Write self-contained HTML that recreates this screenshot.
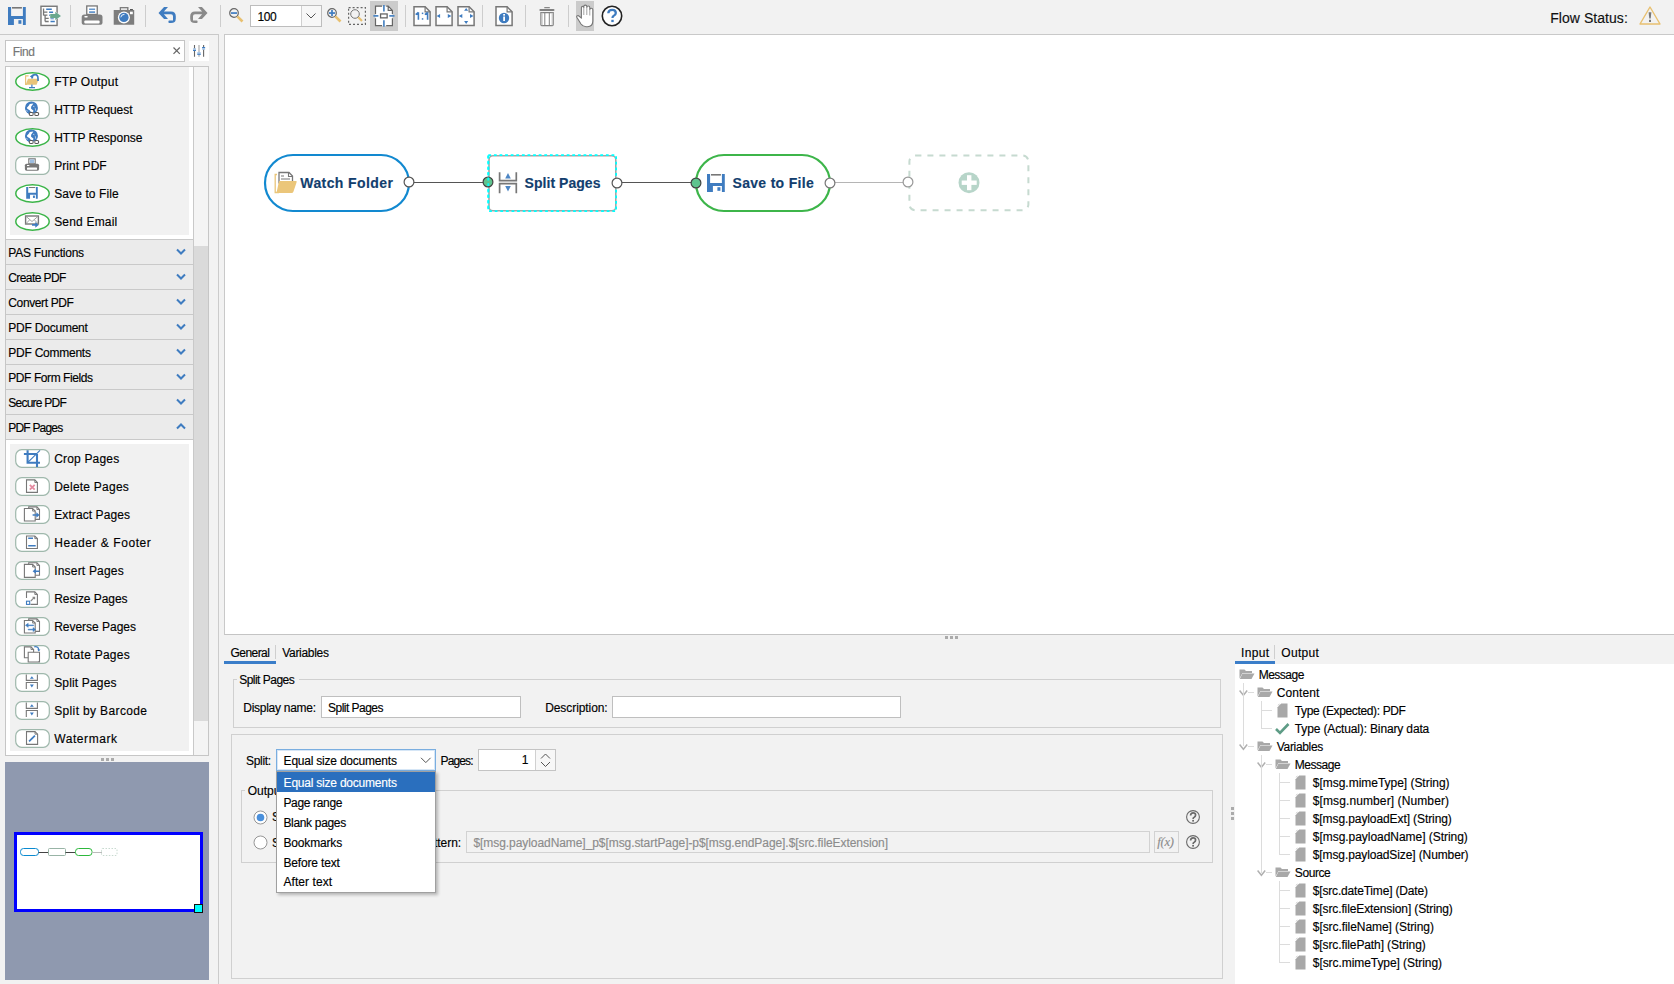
<!DOCTYPE html>
<html><head><meta charset="utf-8">
<style>
*{box-sizing:border-box;margin:0;padding:0}
html,body{width:1674px;height:984px;overflow:hidden;background:#f2f2f2;font-family:"Liberation Sans",sans-serif;font-size:12px;color:#111;position:relative}
.a{position:absolute}
.t{position:absolute;white-space:nowrap;-webkit-text-stroke:0.15px currentColor}
svg{position:absolute;overflow:visible}
</style></head><body>
<div class="a" style="left:0px;top:0px;width:1674px;height:34px;background:#f2f2f2"></div>
<div class="a" style="left:70px;top:5px;width:1px;height:22px;background:#cdcdcd"></div>
<div class="a" style="left:145px;top:5px;width:1px;height:22px;background:#cdcdcd"></div>
<div class="a" style="left:220px;top:5px;width:1px;height:22px;background:#cdcdcd"></div>
<div class="a" style="left:405px;top:5px;width:1px;height:22px;background:#cdcdcd"></div>
<div class="a" style="left:482px;top:5px;width:1px;height:22px;background:#cdcdcd"></div>
<div class="a" style="left:525px;top:5px;width:1px;height:22px;background:#cdcdcd"></div>
<div class="a" style="left:568px;top:5px;width:1px;height:22px;background:#cdcdcd"></div>
<div class="a" style="left:370px;top:1px;width:28px;height:30px;background:#cbcbcb"></div>
<div class="a" style="left:576px;top:1px;width:18px;height:30px;background:#cbcbcb"></div>
<svg style="left:8px;top:7px" width="18" height="18" viewBox="0 0 18 18" ><path d="M0 0H3.1V9H14.9V0H17.8V17.9H14.9V11.9H5.9V17.9H0Z" fill="#3f7cc0"/><rect x="4" y="0" width="9.9" height="1.6" fill="#777"/><rect x="10.4" y="13.2" width="3" height="3.6" fill="#3f7cc0"/></svg>
<svg style="left:36px;top:2px" width="28" height="28" viewBox="0 0 28 28" ><rect x="4.97" y="4.26" width="16.1" height="19.2" fill="#fff" stroke="#777" stroke-width="1.4"/><path d="M7.54 6.5V13.4M7.54 10.1H11.4M7.54 13.1H11.4M9.1 13.4V19.5M9.1 16.4H12.7M9.1 19.5H12.7" stroke="#777" stroke-width="1.3" fill="none"/><path d="M10.2 7.3H15.8M13.1 10.2H17.1M13.1 13.2H14M14.5 16.4H17.8M14.5 19.4H18.8" stroke="#3f7cc0" stroke-width="1.5"/><path d="M14.2 11.95H19.3V9.8L25 13.9L19.3 17.9V15.94H14.2Z" fill="#6aa88e" stroke="#f2f2f2" stroke-width="0.8" paint-order="stroke"/></svg>
<svg style="left:78px;top:2px" width="28" height="28" viewBox="0 0 28 28" ><rect x="8.75" y="3.95" width="10.5" height="8.5" fill="#fff" stroke="#777" stroke-width="1.3"/><path d="M11.1 7.3H17.1M11.1 10.1H17.1" stroke="#3f7cc0" stroke-width="1.6" opacity=".8"/><rect x="3.7" y="12.5" width="20.8" height="10.3" rx="2.6" fill="#808080"/><rect x="6.3" y="18.5" width="15.3" height="3.1" rx="1" fill="#fff"/><rect x="6.3" y="14" width="3.4" height="1.5" rx=".7" fill="#fff"/></svg>
<svg style="left:110px;top:2px" width="28" height="28" viewBox="0 0 28 28" ><path d="M3.7 8.1H9.7V5H18.5V8.1H24.2V22.8H3.7Z" fill="#7d7d7d"/><rect x="11" y="6.4" width="6.1" height="1.4" fill="#fff"/><rect x="20" y="7" width="2.9" height="1.1" fill="#555"/><rect x="20" y="9.7" width="2.8" height="2.5" fill="#fff"/><circle cx="13.9" cy="15.4" r="6" fill="#fff"/><circle cx="13.9" cy="15.4" r="4.7" fill="#3f7cc0"/><path d="M10.8 15.3Q11 12.5 14.5 12.3" stroke="#fff" stroke-width="0.9" fill="none"/></svg>
<svg style="left:158px;top:7px" width="19" height="17" viewBox="0 0 19 17" ><path d="M0.5 6L6.05 0.05H10L5.9 4.4H13Q17.8 4.4 17.8 9.3V11.5Q17.8 16.1 13 16.1H11.2Q10.4 16.1 10.4 14.75Q10.4 13.4 11.2 13.4H15V9.2Q15 7.3 13 7.3H5.9L10 11.9H6.05Z" fill="#3f7cc0"/></svg>
<svg style="left:190px;top:7px" width="19" height="17" viewBox="0 0 19 17" ><path d="M0.5 6L6.05 0.05H10L5.9 4.4H13Q17.8 4.4 17.8 9.3V11.5Q17.8 16.1 13 16.1H11.2Q10.4 16.1 10.4 14.75Q10.4 13.4 11.2 13.4H15V9.2Q15 7.3 13 7.3H5.9L10 11.9H6.05Z" fill="#8a8a8a" transform="translate(18 0) scale(-1 1)"/></svg>
<svg style="left:229px;top:8px" width="16" height="16" viewBox="0 0 16 16" ><circle cx="5" cy="5" r="4.3" fill="none" stroke="#666" stroke-width="1.2"/><rect x="2" y="4.2" width="6" height="1.7" fill="#3f7cc0"/><path d="M8.3 8.3L13.5 13.5" stroke="#e8c070" stroke-width="2.6"/></svg>
<div class="a" style="left:250px;top:5px;width:72px;height:22px;background:#fff;border:1px solid #bdbdbd"></div>
<div class="a" style="left:301px;top:6px;width:20px;height:20px;background:#f7f7f7;border-left:1px solid #cfcfcf"></div>
<svg style="left:306px;top:13px" width="10" height="6" viewBox="0 0 10 6" ><path d="M0.5 0.5L5 5L9.5 0.5" fill="none" stroke="#555" stroke-width="1"/></svg>
<div class="t" style="left:257.6px;top:10.74px;font-size:12px;line-height:12px;color:#000;letter-spacing:-0.511px;">100</div>
<svg style="left:327px;top:8px" width="16" height="16" viewBox="0 0 16 16" ><circle cx="5" cy="5" r="4.3" fill="none" stroke="#666" stroke-width="1.2"/><rect x="2" y="4.2" width="6" height="1.7" fill="#3f7cc0"/><rect x="4.15" y="2" width="1.7" height="6" fill="#3f7cc0"/><path d="M8.3 8.3L13.5 13.5" stroke="#e8c070" stroke-width="2.6"/></svg>
<svg style="left:348px;top:7px" width="18" height="18" viewBox="0 0 18 18" ><rect x="0.6" y="0.6" width="16.8" height="16.8" fill="none" stroke="#666" stroke-width="1.2" stroke-dasharray="2 2"/><circle cx="7" cy="7" r="4.3" fill="none" stroke="#777" stroke-width="1"/><path d="M10.3 10.3L14 14" stroke="#e8c070" stroke-width="2.2"/></svg>
<svg style="left:373px;top:4px" width="22" height="24" viewBox="0 0 22 24" ><path d="M2.5 2.2H15.2L19.4 6.4V21.7H2.5Z" fill="#fff"/><path d="M9 2.2H2.5V10M2.5 14.2V21.7H9M13.2 21.7H19.4V14.2M19.4 10V6.4L15.2 2.2H13.2M15.2 2.2V6.4H19.4" fill="none" stroke="#666" stroke-width="1.2"/><rect x="7.55" y="9.95" width="6.6" height="3.9" fill="#fff" stroke="#666" stroke-width="1.3"/><path d="M10.9 0.9V7.5M10.9 16.3V22.8M0.4 11.9H5.4M16.3 11.9H21.5" stroke="#4d86c4" stroke-width="1.7"/></svg>
<svg style="left:413px;top:5px" width="19" height="22" viewBox="0 0 19 22" ><path d="M1 1.8H12.1L17.1 6.8V20.5H1Z" fill="#fff" stroke="#777" stroke-width="1.5"/><path d="M12.1 1.8V6.8H17.1" fill="none" stroke="#777" stroke-width="1.2"/><path d="M5.4 7.3V14.8M2.7 9.6L5.4 7.5M14.6 7.3V14.8M11.9 9.6L14.6 7.5" fill="none" stroke="#3f7cc0" stroke-width="1.6"/><rect x="8.8" y="7.6" width="1.5" height="1.5" fill="#3f7cc0"/><rect x="8.8" y="13.2" width="1.5" height="1.5" fill="#3f7cc0"/></svg>
<svg style="left:435px;top:5px" width="19" height="22" viewBox="0 0 19 22" ><path d="M1 1.8H12.1L17.1 6.8V20.5H1Z" fill="#fff" stroke="#777" stroke-width="1.5"/><path d="M12.1 1.8V6.8H17.1" fill="none" stroke="#777" stroke-width="1.2"/><path d="M1.6 11L5.1 8.9V13.1Z M16.4 11L12.8 8.9V13.1Z" fill="#3f7cc0"/></svg>
<svg style="left:457px;top:5px" width="19" height="22" viewBox="0 0 19 22" ><path d="M1 1.8H12.1L17.1 6.8V20.5H1Z" fill="#fff" stroke="#777" stroke-width="1.5"/><path d="M12.1 1.8V6.8H17.1" fill="none" stroke="#777" stroke-width="1.2"/><path d="M1.8 11L5.3 8.9V13.1Z M16.5 11L13 8.9V13.1Z M9.15 2.9L7.1 5.8H11.2Z M9.15 19L7.1 16.1H11.2Z" fill="#3f7cc0"/></svg>
<svg style="left:495px;top:5px" width="19" height="22" viewBox="0 0 19 22" ><path d="M1 1.8H12.1L17.1 6.8V20.5H1Z" fill="#fff" stroke="#777" stroke-width="1.5"/><path d="M12.1 1.8V6.8H17.1" fill="none" stroke="#777" stroke-width="1.2"/><circle cx="9" cy="13" r="5.2" fill="#3f7cc0"/><rect x="8.2" y="11.5" width="1.8" height="4.5" fill="#fff"/><rect x="8.2" y="9" width="1.8" height="1.6" fill="#fff"/></svg>
<svg style="left:539px;top:7px" width="16" height="20" viewBox="0 0 16 20" ><rect x="5.2" y="0" width="5.7" height="1.2" rx=".5" fill="#888"/><rect x="0.4" y="1.9" width="15.1" height="2.2" rx="1" fill="#808080"/><path d="M1.9 5.6H14.2V17.8Q14.2 18.6 13.4 18.6H2.7Q1.9 18.6 1.9 17.8Z" fill="#fff" stroke="#808080" stroke-width="1.2"/><rect x="5.3" y="5.2" width="1" height="13.4" fill="#808080"/><rect x="9.8" y="5.2" width="1" height="13.4" fill="#808080"/><rect x="2.6" y="5.8" width="1.1" height="12.4" fill="#c8c8c8"/><rect x="12.6" y="5.8" width="1.1" height="12.4" fill="#c8c8c8"/></svg>
<svg style="left:576px;top:4px" width="18" height="24" viewBox="0 0 18 24" ><path d="M5.4 14.2V3.8Q5.4 2.4 6.6 2.4Q7.8 2.4 7.8 3.5V2.6Q7.8 1.1 9.3 1.1Q10.8 1.1 10.8 2.6V3.3Q10.8 2 12.3 2Q13.8 2 13.8 3.5V5.5Q13.8 4.3 15.3 4.3Q16.8 4.3 16.8 5.8V17Q16.8 22.7 11.5 22.7H10Q6.8 22.7 5 20L0.8 13.3Q0.3 12 1.5 11.7Q2.6 11.5 3.5 12.5Z" fill="#fff" stroke="#777" stroke-width="1.1" stroke-linejoin="round"/><path d="M7.8 3.5V11M10.8 3V11M13.8 5V11.5" stroke="#999" stroke-width="0.9"/></svg>
<svg style="left:601px;top:5px" width="22" height="22" viewBox="0 0 22 22" ><circle cx="11" cy="11" r="9.7" fill="#fff" stroke="#222" stroke-width="1.6"/><path d="M7.3 8.3Q7.5 4.8 11.2 4.8Q14.8 4.8 14.8 8Q14.8 10 12.5 11Q11.5 11.5 11.5 13" fill="none" stroke="#3f7cc0" stroke-width="2.3"/><rect x="10.3" y="14.8" width="2.4" height="2.3" fill="#3f7cc0"/></svg>
<div class="t" style="left:1550.2px;top:11.05px;font-size:14px;line-height:14px;color:#111;letter-spacing:0.052px;">Flow Status:</div>
<svg style="left:1639px;top:6px" width="22" height="19" viewBox="0 0 22 19" ><path d="M11 1L21 18H1Z" fill="none" stroke="#e8c070" stroke-width="1.4" stroke-linejoin="round"/><path d="M9.6 6.3H12.4L11.7 12.6H10.3Z" fill="#777"/><rect x="10" y="13.8" width="2" height="2.2" fill="#777"/></svg>
<div class="a" style="left:0px;top:34px;width:219px;height:1px;background:#c9c9c9"></div>
<div class="a" style="left:218px;top:34px;width:1px;height:950px;background:#cbcbcb"></div>
<div class="a" style="left:5px;top:40px;width:180px;height:22px;background:#fff;border:1px solid #c4c4c4"></div>
<div class="t" style="left:12.7px;top:45.84px;font-size:12px;line-height:12px;color:#767676;letter-spacing:-0.381px;">Find</div>
<svg style="left:172.9px;top:46.8px" width="8" height="8" viewBox="0 0 8 8" ><path d="M0.5 0.5L6.8 6.8M6.8 0.5L0.5 6.8" stroke="#666" stroke-width="1.2"/></svg>
<div class="a" style="left:189px;top:41px;width:20px;height:20px;background:#fff"></div>
<svg style="left:192px;top:44px" width="14" height="14" viewBox="0 0 14 14" ><path d="M2.5 1V12.8M11.6 1V12.8" stroke="#666" stroke-width="1.1"/><path d="M7 1V12.8" stroke="#aaa" stroke-width="1.2"/><rect x="1" y="4.2" width="3" height="2.8" fill="#a8c6e8"/><rect x="1" y="6" width="3" height="1" fill="#3f7cc0"/><rect x="5.3" y="8" width="3.4" height="2.8" fill="#a8c6e8"/><rect x="5.3" y="9.8" width="3.4" height="1" fill="#3f7cc0"/><rect x="10.1" y="3" width="3" height="2.8" fill="#a8c6e8"/><rect x="10.1" y="3" width="3" height="1" fill="#3f7cc0"/></svg>
<div class="a" style="left:5px;top:66px;width:204px;height:690px;background:#fff;border:1px solid #c6c6c6"></div>
<div class="a" style="left:194px;top:67px;width:14px;height:688px;background:#f4f4f4"></div>
<div class="a" style="left:194px;top:246px;width:14px;height:475px;background:#dadada"></div>
<div class="a" style="left:193px;top:67px;width:1px;height:688px;background:#c9c9c9"></div>
<div class="a" style="left:10px;top:67px;width:179px;height:168px;background:#f1f1f1"></div>
<svg style="left:15px;top:72px" width="35" height="19" viewBox="0 0 35 19" ><rect x="0.8" y="0.8" width="33.4" height="17.4" rx="16.7" ry="8.7" fill="#fff" stroke="#3db54a" stroke-width="1.5"/></svg>
<svg style="left:15px;top:72px" width="35" height="19" viewBox="0 0 35 19" ><path d="M13.6 3.8H10.6V12.3H12" fill="none" stroke="#e9c47a" stroke-width="1.2"/><path d="M10.6 12.65L13 6.7H23.9L21.6 12.65Z" fill="#e9c47a"/><path d="M17 6.5Q17 2.6 20.3 2.6Q23 2.6 23 6.5V9" fill="none" stroke="#3f7cc0" stroke-width="1.7"/><path d="M14.8 4.5L17.8 2.2L18.2 6.2Z" fill="#3f7cc0"/><path d="M14 15.6H20M16.9 12.6V15.6" stroke="#3f7cc0" stroke-width="1.2"/></svg>
<div class="t" style="left:54.2px;top:75.74px;font-size:12px;line-height:12px;color:#000;letter-spacing:0.220px;">FTP Output</div>
<svg style="left:15px;top:100px" width="35" height="19" viewBox="0 0 35 19" ><rect x="0.7" y="0.7" width="33.6" height="17.6" rx="6" ry="6" fill="#fff" stroke="#9fb8ac" stroke-width="1.2"/></svg>
<svg style="left:15px;top:100px" width="35" height="19" viewBox="0 0 35 19" ><circle cx="16.45" cy="7.9" r="6.5" fill="#3f7cc0"/><path d="M14.7 3.9L18.4 3.5L16.1 6.7V8.7L18.4 10.6L18 12.4L15.5 11.4L14.7 10.2L12.3 8.7L11.9 7.7L14.1 5.3Z" fill="#fff"/><path d="M18 6.2L19.5 6.8M20.3 8.2L20.7 10.8M11.5 10L12.5 11.5" stroke="#fff" stroke-width="0.7" fill="none" opacity=".8"/><rect x="14.2" y="12.5" width="4.1" height="3" rx="1.4" fill="#fff" stroke="#555" stroke-width="1.1"/><rect x="19.6" y="12.5" width="4.1" height="3" rx="1.4" fill="#fff" stroke="#555" stroke-width="1.1"/><rect x="18" y="13.5" width="2" height="1" fill="#bbb"/></svg>
<div class="t" style="left:54.2px;top:103.74px;font-size:12px;line-height:12px;color:#000;letter-spacing:-0.078px;">HTTP Request</div>
<svg style="left:15px;top:128px" width="35" height="19" viewBox="0 0 35 19" ><rect x="0.8" y="0.8" width="33.4" height="17.4" rx="16.7" ry="8.7" fill="#fff" stroke="#3db54a" stroke-width="1.5"/></svg>
<svg style="left:15px;top:128px" width="35" height="19" viewBox="0 0 35 19" ><circle cx="16.45" cy="7.9" r="6.5" fill="#3f7cc0"/><path d="M14.7 3.9L18.4 3.5L16.1 6.7V8.7L18.4 10.6L18 12.4L15.5 11.4L14.7 10.2L12.3 8.7L11.9 7.7L14.1 5.3Z" fill="#fff"/><path d="M18 6.2L19.5 6.8M20.3 8.2L20.7 10.8M11.5 10L12.5 11.5" stroke="#fff" stroke-width="0.7" fill="none" opacity=".8"/><rect x="14.2" y="12.5" width="4.1" height="3" rx="1.4" fill="#fff" stroke="#555" stroke-width="1.1"/><rect x="19.6" y="12.5" width="4.1" height="3" rx="1.4" fill="#fff" stroke="#555" stroke-width="1.1"/><rect x="18" y="13.5" width="2" height="1" fill="#bbb"/></svg>
<div class="t" style="left:54.2px;top:131.74px;font-size:12px;line-height:12px;color:#000;letter-spacing:-0.017px;">HTTP Response</div>
<svg style="left:15px;top:156px" width="35" height="19" viewBox="0 0 35 19" ><rect x="0.7" y="0.7" width="33.6" height="17.6" rx="6" ry="6" fill="#fff" stroke="#9fb8ac" stroke-width="1.2"/></svg>
<svg style="left:15px;top:156px" width="35" height="19" viewBox="0 0 35 19" ><rect x="13.8" y="2.8" width="6.4" height="5" fill="#fff" stroke="#777" stroke-width="1.1"/><rect x="14.9" y="3.4" width="4.2" height="3.6" fill="#9dbde0"/><rect x="9.9" y="7.7" width="14.2" height="7" rx="1.6" fill="#777"/><rect x="12" y="11.6" width="10" height="2.2" rx=".5" fill="#fff"/><rect x="12" y="9" width="2.3" height="1" fill="#fff"/></svg>
<div class="t" style="left:54.2px;top:159.74px;font-size:12px;line-height:12px;color:#000;letter-spacing:0.062px;">Print PDF</div>
<svg style="left:15px;top:184px" width="35" height="19" viewBox="0 0 35 19" ><rect x="0.8" y="0.8" width="33.4" height="17.4" rx="16.7" ry="8.7" fill="#fff" stroke="#3db54a" stroke-width="1.5"/></svg>
<svg style="left:15px;top:184px" width="35" height="19" viewBox="0 0 35 19" ><g transform="translate(11.2 3) scale(0.65)"><path d="M0 0H3.1V9H14.9V0H17.8V17.9H14.9V11.9H5.9V17.9H0Z" fill="#3f7cc0"/><rect x="4" y="0" width="9.9" height="1.6" fill="#777"/><rect x="10.4" y="13.2" width="3" height="3.6" fill="#3f7cc0"/></g></svg>
<div class="t" style="left:54.2px;top:187.74px;font-size:12px;line-height:12px;color:#000;letter-spacing:0.103px;">Save to File</div>
<svg style="left:15px;top:212px" width="35" height="19" viewBox="0 0 35 19" ><rect x="0.8" y="0.8" width="33.4" height="17.4" rx="16.7" ry="8.7" fill="#fff" stroke="#3db54a" stroke-width="1.5"/></svg>
<svg style="left:15px;top:212px" width="35" height="19" viewBox="0 0 35 19" ><rect x="10.6" y="4" width="12.8" height="8" fill="#fff" stroke="#777" stroke-width="1.4"/><path d="M10.8 4.2L17 9.5L23.2 4.2M10.8 11.8L14.5 8M23.2 11.8L19.5 8" fill="none" stroke="#999" stroke-width="0.9"/><path d="M17 12H20.3V10L23.7 12.9L20.3 15.8V13.8H17Z" fill="#3f7cc0"/></svg>
<div class="t" style="left:54.2px;top:215.74px;font-size:12px;line-height:12px;color:#000;letter-spacing:0.182px;">Send Email</div>
<div class="a" style="left:6px;top:239px;width:187px;height:26px;background:#ebebeb;border-top:1px solid #c9c9c9;border-bottom:1px solid #c9c9c9"></div>
<div class="t" style="left:8.3px;top:246.64px;font-size:12px;line-height:12px;color:#000;letter-spacing:-0.223px;">PAS Functions</div>
<svg style="left:176px;top:247.8px" width="10" height="7" viewBox="0 0 10 7" ><path d="M1 1.5L5 5.5L9 1.5" fill="none" stroke="#3f7cc0" stroke-width="2"/></svg>
<div class="a" style="left:6px;top:264px;width:187px;height:26px;background:#ebebeb;border-top:1px solid #c9c9c9;border-bottom:1px solid #c9c9c9"></div>
<div class="t" style="left:8.3px;top:271.64px;font-size:12px;line-height:12px;color:#000;letter-spacing:-0.595px;">Create PDF</div>
<svg style="left:176px;top:272.8px" width="10" height="7" viewBox="0 0 10 7" ><path d="M1 1.5L5 5.5L9 1.5" fill="none" stroke="#3f7cc0" stroke-width="2"/></svg>
<div class="a" style="left:6px;top:289px;width:187px;height:26px;background:#ebebeb;border-top:1px solid #c9c9c9;border-bottom:1px solid #c9c9c9"></div>
<div class="t" style="left:8.3px;top:296.64px;font-size:12px;line-height:12px;color:#000;letter-spacing:-0.375px;">Convert PDF</div>
<svg style="left:176px;top:297.8px" width="10" height="7" viewBox="0 0 10 7" ><path d="M1 1.5L5 5.5L9 1.5" fill="none" stroke="#3f7cc0" stroke-width="2"/></svg>
<div class="a" style="left:6px;top:314px;width:187px;height:26px;background:#ebebeb;border-top:1px solid #c9c9c9;border-bottom:1px solid #c9c9c9"></div>
<div class="t" style="left:8.3px;top:321.64px;font-size:12px;line-height:12px;color:#000;letter-spacing:-0.220px;">PDF Document</div>
<svg style="left:176px;top:322.8px" width="10" height="7" viewBox="0 0 10 7" ><path d="M1 1.5L5 5.5L9 1.5" fill="none" stroke="#3f7cc0" stroke-width="2"/></svg>
<div class="a" style="left:6px;top:339px;width:187px;height:26px;background:#ebebeb;border-top:1px solid #c9c9c9;border-bottom:1px solid #c9c9c9"></div>
<div class="t" style="left:8.3px;top:346.64px;font-size:12px;line-height:12px;color:#000;letter-spacing:-0.250px;">PDF Comments</div>
<svg style="left:176px;top:347.8px" width="10" height="7" viewBox="0 0 10 7" ><path d="M1 1.5L5 5.5L9 1.5" fill="none" stroke="#3f7cc0" stroke-width="2"/></svg>
<div class="a" style="left:6px;top:364px;width:187px;height:26px;background:#ebebeb;border-top:1px solid #c9c9c9;border-bottom:1px solid #c9c9c9"></div>
<div class="t" style="left:8.3px;top:371.64px;font-size:12px;line-height:12px;color:#000;letter-spacing:-0.427px;">PDF Form Fields</div>
<svg style="left:176px;top:372.8px" width="10" height="7" viewBox="0 0 10 7" ><path d="M1 1.5L5 5.5L9 1.5" fill="none" stroke="#3f7cc0" stroke-width="2"/></svg>
<div class="a" style="left:6px;top:389px;width:187px;height:26px;background:#ebebeb;border-top:1px solid #c9c9c9;border-bottom:1px solid #c9c9c9"></div>
<div class="t" style="left:8.3px;top:396.64px;font-size:12px;line-height:12px;color:#000;letter-spacing:-0.762px;">Secure PDF</div>
<svg style="left:176px;top:397.8px" width="10" height="7" viewBox="0 0 10 7" ><path d="M1 1.5L5 5.5L9 1.5" fill="none" stroke="#3f7cc0" stroke-width="2"/></svg>
<div class="a" style="left:6px;top:414px;width:187px;height:26px;background:#ebebeb;border-top:1px solid #c9c9c9;border-bottom:1px solid #c9c9c9"></div>
<div class="t" style="left:8.3px;top:421.64px;font-size:12px;line-height:12px;color:#000;letter-spacing:-0.807px;">PDF Pages</div>
<svg style="left:176px;top:422.8px" width="10" height="7" viewBox="0 0 10 7" ><path d="M1 5.5L5 1.5L9 5.5" fill="none" stroke="#3f7cc0" stroke-width="2"/></svg>
<div class="a" style="left:10px;top:444px;width:179px;height:307px;background:#f1f1f1"></div>
<svg style="left:15px;top:449px" width="35" height="19" viewBox="0 0 35 19" ><rect x="0.7" y="0.7" width="33.6" height="17.6" rx="6" ry="6" fill="#fff" stroke="#9fb8ac" stroke-width="1.2"/></svg>
<svg style="left:15px;top:449px" width="35" height="19" viewBox="0 0 35 19" ><path d="M8.9 5H22M12.6 1.3V13.7H25M22 5V17.9" stroke="#3f7cc0" stroke-width="2.1" fill="none"/><path d="M12.6 13.7L25 1.3" stroke="#3f7cc0" stroke-width="1.2"/></svg>
<div class="t" style="left:54.2px;top:452.74px;font-size:12px;line-height:12px;color:#000;letter-spacing:0.181px;">Crop Pages</div>
<svg style="left:15px;top:477px" width="35" height="19" viewBox="0 0 35 19" ><rect x="0.7" y="0.7" width="33.6" height="17.6" rx="6" ry="6" fill="#fff" stroke="#9fb8ac" stroke-width="1.2"/></svg>
<svg style="left:15px;top:477px" width="35" height="19" viewBox="0 0 35 19" ><path d="M11.5 2.9H19.799999999999997L22.4 5.5V15.4H11.5Z" fill="#fff" stroke="#777" stroke-width="1.1"/><path d="M19.799999999999997 2.9V5.5H22.4" fill="none" stroke="#777" stroke-width="0.9"/><path d="M14.8 7.8L19.7 12.7M19.7 7.8L14.8 12.7" stroke="#e48ba1" stroke-width="1.8"/></svg>
<div class="t" style="left:54.2px;top:480.74px;font-size:12px;line-height:12px;color:#000;letter-spacing:0.232px;">Delete Pages</div>
<svg style="left:15px;top:505px" width="35" height="19" viewBox="0 0 35 19" ><rect x="0.7" y="0.7" width="33.6" height="17.6" rx="6" ry="6" fill="#fff" stroke="#9fb8ac" stroke-width="1.2"/></svg>
<svg style="left:15px;top:505px" width="35" height="19" viewBox="0 0 35 19" ><path d="M13.7 1.9H21.9L24.5 4.5V14.4H13.7Z" fill="#fff" stroke="#777" stroke-width="1.1"/><path d="M21.9 1.9V4.5H24.5" fill="none" stroke="#777" stroke-width="0.9"/><path d="M9.4 3.5H17.599999999999998L20.2 6.1V16H9.4Z" fill="#fff" stroke="#777" stroke-width="1.1"/><path d="M17.599999999999998 3.5V6.1H20.2" fill="none" stroke="#777" stroke-width="0.9"/><path d="M17.6 9.2H21.3V7.2L24.6 10L21.3 12.8V10.8H17.6Z" fill="#3f7cc0"/></svg>
<div class="t" style="left:54.2px;top:508.74px;font-size:12px;line-height:12px;color:#000;letter-spacing:0.092px;">Extract Pages</div>
<svg style="left:15px;top:533px" width="35" height="19" viewBox="0 0 35 19" ><rect x="0.7" y="0.7" width="33.6" height="17.6" rx="6" ry="6" fill="#fff" stroke="#9fb8ac" stroke-width="1.2"/></svg>
<svg style="left:15px;top:533px" width="35" height="19" viewBox="0 0 35 19" ><path d="M11.5 3H19.799999999999997L22.4 5.6V15.5H11.5Z" fill="#fff" stroke="#777" stroke-width="1.1"/><path d="M19.799999999999997 3V5.6H22.4" fill="none" stroke="#777" stroke-width="0.9"/><rect x="13.2" y="4.5" width="4.8" height="1.5" fill="#3f7cc0"/><rect x="13.2" y="12" width="7.5" height="1.5" fill="#3f7cc0"/></svg>
<div class="t" style="left:54.2px;top:536.74px;font-size:12px;line-height:12px;color:#000;letter-spacing:0.564px;">Header &amp; Footer</div>
<svg style="left:15px;top:561px" width="35" height="19" viewBox="0 0 35 19" ><rect x="0.7" y="0.7" width="33.6" height="17.6" rx="6" ry="6" fill="#fff" stroke="#9fb8ac" stroke-width="1.2"/></svg>
<svg style="left:15px;top:561px" width="35" height="19" viewBox="0 0 35 19" ><path d="M13.7 1.8H21.9L24.5 4.4V14.3H13.7Z" fill="#fff" stroke="#777" stroke-width="1.1"/><path d="M21.9 1.8V4.4H24.5" fill="none" stroke="#777" stroke-width="0.9"/><path d="M9.4 3.4H17.599999999999998L20.2 6.0V16.4H9.4Z" fill="#fff" stroke="#777" stroke-width="1.1"/><path d="M17.599999999999998 3.4V6.0H20.2" fill="none" stroke="#777" stroke-width="0.9"/><path d="M24.6 9.4H20.9V7.6L17.6 10.2L20.9 12.8V11H24.6Z" fill="#3f7cc0"/></svg>
<div class="t" style="left:54.2px;top:564.74px;font-size:12px;line-height:12px;color:#000;letter-spacing:0.194px;">Insert Pages</div>
<svg style="left:15px;top:589px" width="35" height="19" viewBox="0 0 35 19" ><rect x="0.7" y="0.7" width="33.6" height="17.6" rx="6" ry="6" fill="#fff" stroke="#9fb8ac" stroke-width="1.2"/></svg>
<svg style="left:15px;top:589px" width="35" height="19" viewBox="0 0 35 19" ><path d="M11.5 9V2.9H19.8L22.4 5.5V15.4H15.5" fill="none" stroke="#777" stroke-width="1.1"/><path d="M19.8 2.9V5.5H22.4" fill="none" stroke="#777" stroke-width="0.9"/><rect x="11.5" y="12.2" width="3.2" height="3.2" fill="none" stroke="#3f7cc0" stroke-width="1.1"/><path d="M15.8 12L19.6 8.2M17.5 8.2H19.6V10.3" fill="none" stroke="#888" stroke-width="1.1"/></svg>
<div class="t" style="left:54.2px;top:592.74px;font-size:12px;line-height:12px;color:#000;letter-spacing:-0.067px;">Resize Pages</div>
<svg style="left:15px;top:617px" width="35" height="19" viewBox="0 0 35 19" ><rect x="0.7" y="0.7" width="33.6" height="17.6" rx="6" ry="6" fill="#fff" stroke="#9fb8ac" stroke-width="1.2"/></svg>
<svg style="left:15px;top:617px" width="35" height="19" viewBox="0 0 35 19" ><path d="M13.7 1.9H21.9L24.5 4.5V14.4H13.7Z" fill="#fff" stroke="#777" stroke-width="1.1"/><path d="M21.9 1.9V4.5H24.5" fill="none" stroke="#777" stroke-width="0.9"/><path d="M9.4 3.5H17.599999999999998L20.2 6.1V16H9.4Z" fill="#fff" stroke="#777" stroke-width="1.1"/><path d="M17.599999999999998 3.5V6.1H20.2" fill="none" stroke="#777" stroke-width="0.9"/><path d="M18.6 7.9H13.2V6.3L10.4 8.3L13.2 10.3V8.7H18.6Z M13.2 12.2H18V10.6L20.6 12.6L18 14.6V13H13.2Z" fill="#3f7cc0" stroke="#3f7cc0" stroke-width=".5"/></svg>
<div class="t" style="left:54.2px;top:620.74px;font-size:12px;line-height:12px;color:#000;letter-spacing:-0.020px;">Reverse Pages</div>
<svg style="left:15px;top:645px" width="35" height="19" viewBox="0 0 35 19" ><rect x="0.7" y="0.7" width="33.6" height="17.6" rx="6" ry="6" fill="#fff" stroke="#9fb8ac" stroke-width="1.2"/></svg>
<svg style="left:15px;top:645px" width="35" height="19" viewBox="0 0 35 19" ><path d="M9.4 1.9H16.0L18.6 4.5V12.7H9.4Z" fill="#fff" stroke="#777" stroke-width="1.1"/><path d="M16.0 1.9V4.5H18.6" fill="none" stroke="#777" stroke-width="0.9"/><path d="M13.2 7.3H24.5L24.5 7.3V17H13.2Z" fill="#fff" stroke="#777" stroke-width="1.1"/><path d="M24.5 7.3V7.3H24.5" fill="none" stroke="#777" stroke-width="0.9"/><path d="M23.5 16.6L24.5 15.6" stroke="#777" stroke-width="0.9"/><path d="M19.2 1.8Q23.6 1.2 23.8 5.2" fill="none" stroke="#3f7cc0" stroke-width="1.3"/><path d="M22.2 4.6H25.4L23.8 6.6Z" fill="#3f7cc0"/></svg>
<div class="t" style="left:54.2px;top:648.74px;font-size:12px;line-height:12px;color:#000;letter-spacing:0.253px;">Rotate Pages</div>
<svg style="left:15px;top:673px" width="35" height="19" viewBox="0 0 35 19" ><rect x="0.7" y="0.7" width="33.6" height="17.6" rx="6" ry="6" fill="#fff" stroke="#9fb8ac" stroke-width="1.2"/></svg>
<svg style="left:15px;top:673px" width="35" height="19" viewBox="0 0 35 19" ><path d="M11.3 1.6V7.4H22.4V1.6M11.3 15.9V9.5H22.4V15.9" fill="none" stroke="#777" stroke-width="1.1"/><path d="M16.85 3.3L14.9 5.8H18.8Z M16.85 14.5L14.9 11.6H18.8Z" fill="#3f7cc0"/></svg>
<div class="t" style="left:54.2px;top:676.74px;font-size:12px;line-height:12px;color:#000;letter-spacing:0.160px;">Split Pages</div>
<svg style="left:15px;top:701px" width="35" height="19" viewBox="0 0 35 19" ><rect x="0.7" y="0.7" width="33.6" height="17.6" rx="6" ry="6" fill="#fff" stroke="#9fb8ac" stroke-width="1.2"/></svg>
<svg style="left:15px;top:701px" width="35" height="19" viewBox="0 0 35 19" ><path d="M11.3 1.6V7.4H22.4V1.6M11.3 15.9V9.5H22.4V15.9" fill="none" stroke="#777" stroke-width="1.1"/><path d="M16.85 3.3L14.9 5.8H18.8Z M16.85 14.5L14.9 11.6H18.8Z" fill="#3f7cc0"/></svg>
<div class="t" style="left:54.2px;top:704.74px;font-size:12px;line-height:12px;color:#000;letter-spacing:0.361px;">Split by Barcode</div>
<svg style="left:15px;top:729px" width="35" height="19" viewBox="0 0 35 19" ><rect x="0.7" y="0.7" width="33.6" height="17.6" rx="6" ry="6" fill="#fff" stroke="#9fb8ac" stroke-width="1.2"/></svg>
<svg style="left:15px;top:729px" width="35" height="19" viewBox="0 0 35 19" ><path d="M11.5 2.6H20.0L22.6 5.2V15.4H11.5Z" fill="#fff" stroke="#777" stroke-width="1.1"/><path d="M20.0 2.6V5.2H22.6" fill="none" stroke="#777" stroke-width="0.9"/><path d="M14.1 12.3L19.9 6.6" stroke="#3f7cc0" stroke-width="1.7"/></svg>
<div class="t" style="left:54.2px;top:732.74px;font-size:12px;line-height:12px;color:#000;letter-spacing:0.584px;">Watermark</div>
<div class="a" style="left:101px;top:758px;width:3px;height:3px;background:#ababab"></div>
<div class="a" style="left:106px;top:758px;width:3px;height:3px;background:#ababab"></div>
<div class="a" style="left:111px;top:758px;width:3px;height:3px;background:#ababab"></div>
<div class="a" style="left:5px;top:762px;width:204px;height:218px;background:#8f99af"></div>
<div class="a" style="left:14px;top:832px;width:189px;height:80px;background:#fff;border:3px solid #0000ff"></div>
<div class="a" style="left:194px;top:904px;width:9px;height:9px;background:#00ffff;border:1px solid #111"></div>
<svg style="left:20px;top:847px" width="100" height="10" viewBox="0 0 100 10" ><rect x="0.5" y="1.5" width="18" height="7" rx="3" fill="#fff" stroke="#0a8ad0" stroke-width="1"/><path d="M18.5 5.5H28.5" stroke="#444" stroke-width="1"/><rect x="28.5" y="1.5" width="17" height="7" rx="1" fill="#fff" stroke="#98b4a6" stroke-width="1"/><path d="M45.5 5.5H55.5" stroke="#444" stroke-width="1"/><rect x="55.5" y="1.5" width="16.5" height="7" rx="3" fill="#fff" stroke="#2db83d" stroke-width="1"/><path d="M72 5.5H82" stroke="#bbb" stroke-width="1"/><rect x="81.5" y="1.5" width="15.5" height="7" rx="1" fill="none" stroke="#c8dad0" stroke-width="1" stroke-dasharray="1.5 1.5"/></svg>
<div class="a" style="left:224px;top:34px;width:1450px;height:601px;background:#fff;border-left:1px solid #c9c9c9;border-top:1px solid #c9c9c9;border-bottom:1px solid #c4c4c4"></div>
<svg style="left:400px;top:178px" width="640" height="10" viewBox="0 0 640 10" ><path d="M9 4.5H87" stroke="#555" stroke-width="1.1"/><path d="M221 4.5H295" stroke="#555" stroke-width="1.1"/><path d="M434 4.5H508" stroke="#b5b5b5" stroke-width="1.1"/></svg>
<svg style="left:263px;top:153px" width="150" height="60" viewBox="0 0 150 60" ><rect x="2" y="2" width="144" height="56" rx="28" fill="#fff" stroke="#1289d0" stroke-width="2.2"/></svg>
<svg style="left:273px;top:171px" width="26" height="24" viewBox="0 0 26 24" ><path d="M4 3.5H2.2V21.5H6" fill="none" stroke="#eac57a" stroke-width="1.3"/><path d="M6 12.5V1.5H16L19.5 5V11" fill="#fff" stroke="#777" stroke-width="1.3"/><path d="M15.5 1.5V5.5H19.5" fill="none" stroke="#777" stroke-width="1.1"/><path d="M8 5H11M8 8H17" stroke="#777" stroke-width="1.2"/><path d="M6 10H23Q24 10 23.6 11.2L20.5 20.5Q20 22 18.5 22H3.5Z" fill="#ebc67a"/></svg>
<div class="t" style="left:300.3px;top:176.35px;font-size:14px;line-height:14px;color:#123e6e;font-weight:bold;letter-spacing:0.405px;">Watch Folder</div>
<svg style="left:486px;top:153px" width="134" height="60" viewBox="0 0 134 60" ><rect x="3" y="2.8" width="126.8" height="55" rx="4" fill="#fff" stroke="#a5a5a5" stroke-width="1.6"/><rect x="2.3" y="2.2" width="127.8" height="56" fill="none" stroke="#00ffff" stroke-width="1.8" stroke-dasharray="2.8 2.8"/></svg>
<svg style="left:498px;top:171px" width="21" height="24" viewBox="0 0 21 24" ><path d="M1.6 1.2V9.6H18.3V1.2M1.6 22.2V12.6H18.3V22.2" fill="none" stroke="#777" stroke-width="1.7"/><path d="M10 1.9L7.2 7.6H12.8Z M10 20.4L7.2 15H12.8Z" fill="#4d86c4"/></svg>
<div class="t" style="left:524.5px;top:176.35px;font-size:14px;line-height:14px;color:#123e6e;font-weight:bold;letter-spacing:0.053px;">Split Pages</div>
<svg style="left:694px;top:153px" width="138" height="60" viewBox="0 0 138 60" ><rect x="2" y="2" width="134" height="56" rx="28" fill="#fff" stroke="#3db54a" stroke-width="2.2"/></svg>
<svg style="left:707px;top:174px" width="18" height="18" viewBox="0 0 18 18" ><path d="M0 0H3.1V9H14.9V0H17.8V17.9H14.9V11.9H5.9V17.9H0Z" fill="#3f7cc0"/><rect x="4" y="0" width="9.9" height="1.6" fill="#777"/><rect x="10.4" y="13.2" width="3" height="3.6" fill="#3f7cc0"/></svg>
<div class="t" style="left:732.5px;top:176.35px;font-size:14px;line-height:14px;color:#123e6e;font-weight:bold;letter-spacing:0.308px;">Save to File</div>
<svg style="left:906px;top:152px" width="126" height="62" viewBox="0 0 126 62" ><rect x="3.4" y="3.5" width="119" height="54.8" rx="6" fill="none" stroke="#c6dad0" stroke-width="2" stroke-dasharray="6 6"/><circle cx="63" cy="30.7" r="10.5" fill="#b7d5c9"/><rect x="61" y="23.2" width="4.4" height="15" fill="#fff"/><rect x="55.7" y="28.5" width="15" height="4.4" fill="#fff"/></svg>
<svg style="left:401.6px;top:175.4px" width="14" height="14" viewBox="0 0 14 14" ><circle cx="7" cy="7" r="4.9" fill="#fff" stroke="#555" stroke-width="1.2"/></svg>
<svg style="left:480.5px;top:175.3px" width="14" height="14" viewBox="0 0 14 14" ><circle cx="7" cy="7" r="4.9" fill="#5fc48e" stroke="#444" stroke-width="1.2"/></svg>
<svg style="left:609.7px;top:175.5px" width="14" height="14" viewBox="0 0 14 14" ><circle cx="7" cy="7" r="4.9" fill="#fff" stroke="#555" stroke-width="1.2"/></svg>
<svg style="left:688.5px;top:175.5px" width="14" height="14" viewBox="0 0 14 14" ><circle cx="7" cy="7" r="4.9" fill="#5fc48e" stroke="#444" stroke-width="1.2"/></svg>
<svg style="left:822.5px;top:175.5px" width="14" height="14" viewBox="0 0 14 14" ><circle cx="7" cy="7" r="4.9" fill="#fff" stroke="#777" stroke-width="1.2"/></svg>
<svg style="left:901.4px;top:175.3px" width="14" height="14" viewBox="0 0 14 14" ><circle cx="7" cy="7" r="4.9" fill="#fff" stroke="#999" stroke-width="1.2"/></svg>
<svg style="left:486px;top:153px" width="6" height="60" viewBox="0 0 6 60" ><path d="M2.3 2.2V58" stroke="#00ffff" stroke-width="1.8" stroke-dasharray="2.8 2.8"/></svg>
<div class="a" style="left:219px;top:635px;width:1455px;height:349px;background:#f2f2f2"></div>
<div class="a" style="left:945px;top:636px;width:3px;height:3px;background:#ababab"></div>
<div class="a" style="left:950px;top:636px;width:3px;height:3px;background:#ababab"></div>
<div class="a" style="left:955px;top:636px;width:3px;height:3px;background:#ababab"></div>
<div class="t" style="left:230.5px;top:646.84px;font-size:12px;line-height:12px;color:#000;letter-spacing:-0.549px;">General</div>
<div class="a" style="left:275px;top:645px;width:1px;height:14px;background:#cfcfcf"></div>
<div class="t" style="left:282.2px;top:646.84px;font-size:12px;line-height:12px;color:#000;letter-spacing:-0.292px;">Variables</div>
<div class="a" style="left:224px;top:661px;width:52px;height:3px;background:#3b7ec9"></div>
<div class="a" style="left:233px;top:679px;width:988px;height:49px;border:1px solid #d0d0d0"></div>
<div class="a" style="left:237px;top:676px;width:62px;height:6px;background:#f2f2f2"></div>
<div class="t" style="left:239.2px;top:673.84px;font-size:12px;line-height:12px;color:#000;letter-spacing:-0.520px;">Split Pages</div>
<div class="t" style="left:243.3px;top:701.64px;font-size:12px;line-height:12px;color:#000;letter-spacing:-0.278px;">Display name:</div>
<div class="a" style="left:321px;top:696px;width:200px;height:22px;background:#fff;border:1px solid #bfbfbf"></div>
<div class="t" style="left:328.0px;top:701.64px;font-size:12px;line-height:12px;color:#000;letter-spacing:-0.520px;">Split Pages</div>
<div class="t" style="left:545.2px;top:701.64px;font-size:12px;line-height:12px;color:#000;letter-spacing:-0.078px;">Description:</div>
<div class="a" style="left:612px;top:696px;width:289px;height:22px;background:#fff;border:1px solid #bfbfbf"></div>
<div class="a" style="left:231px;top:734px;width:992px;height:245px;border:1px solid #d0d0d0"></div>
<div class="t" style="left:246.1px;top:754.54px;font-size:12px;line-height:12px;color:#000;letter-spacing:-0.336px;">Split:</div>
<div class="a" style="left:276px;top:749px;width:160px;height:22px;background:#fff;border:1px solid #7aaee0;box-shadow:inset 0 0 0 1px #d6e6f6"></div>
<div class="t" style="left:283.6px;top:754.54px;font-size:12px;line-height:12px;color:#000;letter-spacing:-0.216px;">Equal size documents</div>
<svg style="left:420px;top:757px" width="12" height="7" viewBox="0 0 12 7" ><path d="M1 0.8L5.8 5.6L10.6 0.8" fill="none" stroke="#555" stroke-width="1"/></svg>
<div class="t" style="left:440.5px;top:754.84px;font-size:12px;line-height:12px;color:#000;letter-spacing:-0.872px;">Pages:</div>
<div class="a" style="left:478px;top:749px;width:78px;height:22px;background:#fff;border:1px solid #c4c4c4"></div>
<div class="a" style="left:535px;top:750px;width:20px;height:20px;background:#f7f7f7;border-left:1px solid #d0d0d0"></div>
<svg style="left:540px;top:753px" width="11" height="15" viewBox="0 0 11 15" ><path d="M1 5.5L5.5 1L10 5.5M1 9L5.5 13.5L10 9" fill="none" stroke="#555" stroke-width="1"/></svg>
<div class="t" style="left:521.8px;top:754.24px;font-size:12px;line-height:12px;color:#000;">1</div>
<div class="a" style="left:241px;top:790px;width:972px;height:73px;border:1px solid #d0d0d0"></div>
<div class="a" style="left:245px;top:786px;width:40px;height:8px;background:#f2f2f2"></div>
<div class="t" style="left:247.7px;top:784.84px;font-size:12px;line-height:12px;color:#000;letter-spacing:-0.005px;">Output</div>
<svg style="left:253px;top:810px" width="15" height="15" viewBox="0 0 15 15" ><circle cx="7.5" cy="7.5" r="6.5" fill="#fff" stroke="#8a8a8a" stroke-width="0.9"/><circle cx="7.5" cy="7.5" r="3.8" fill="#4a90dc"/></svg>
<svg style="left:253px;top:835px" width="15" height="15" viewBox="0 0 15 15" ><circle cx="7.5" cy="7.5" r="6.5" fill="#fff" stroke="#8a8a8a" stroke-width="0.9"/></svg>
<div class="t" style="left:272.1px;top:811.34px;font-size:12px;line-height:12px;color:#000;">Single file</div>
<div class="t" style="left:272.1px;top:837.04px;font-size:12px;line-height:12px;color:#000;letter-spacing:-0.029px;">Save with custom file name pattern:</div>
<div class="a" style="left:466px;top:831px;width:684px;height:22px;background:#f2f2f2;border:1px solid #d2d2d2"></div>
<div class="t" style="left:473.5px;top:837.04px;font-size:12px;line-height:12px;color:#8c8c8c;letter-spacing:-0.070px;">$[msg.payloadName]_p$[msg.startPage]-p$[msg.endPage].$[src.fileExtension]</div>
<div class="a" style="left:1154px;top:831px;width:25px;height:22px;border:1px solid #d2d2d2"></div>
<div class="t" style="left:1157.3px;top:836.42px;font-size:12.5px;line-height:12.5px;color:#8c8c8c;letter-spacing:-0.246px;font-family:'Liberation Serif',serif;font-style:italic">f(x)</div>
<svg style="left:1186px;top:810px" width="14" height="14" viewBox="0 0 14 14" ><circle cx="7" cy="7" r="6.4" fill="none" stroke="#6a6a6a" stroke-width="1.1"/><path d="M4.6 5.4Q4.6 2.9 7.1 2.9Q9.6 2.9 9.6 5.1Q9.6 6.5 8.2 7.2Q7.1 7.7 7.1 8.9" fill="none" stroke="#6a6a6a" stroke-width="1.7"/><rect x="6.2" y="9.9" width="1.8" height="1.7" fill="#6a6a6a"/></svg>
<svg style="left:1186px;top:835.3px" width="14" height="14" viewBox="0 0 14 14" ><circle cx="7" cy="7" r="6.4" fill="none" stroke="#6a6a6a" stroke-width="1.1"/><path d="M4.6 5.4Q4.6 2.9 7.1 2.9Q9.6 2.9 9.6 5.1Q9.6 6.5 8.2 7.2Q7.1 7.7 7.1 8.9" fill="none" stroke="#6a6a6a" stroke-width="1.7"/><rect x="6.2" y="9.9" width="1.8" height="1.7" fill="#6a6a6a"/></svg>
<div class="a" style="left:276px;top:771px;width:160px;height:122px;background:#fff;border:1px solid #a0a0a0;box-shadow:2px 2px 3px rgba(0,0,0,.25)"></div>
<div class="a" style="left:277px;top:772px;width:158px;height:20px;background:#2a6fbe"></div>
<div class="t" style="left:283.6px;top:776.54px;font-size:12px;line-height:12px;color:#fff;letter-spacing:-0.216px;">Equal size documents</div>
<div class="t" style="left:283.4px;top:796.84px;font-size:12px;line-height:12px;color:#000;letter-spacing:-0.339px;">Page range</div>
<div class="t" style="left:283.4px;top:816.74px;font-size:12px;line-height:12px;color:#000;letter-spacing:-0.325px;">Blank pages</div>
<div class="t" style="left:283.4px;top:836.64px;font-size:12px;line-height:12px;color:#000;letter-spacing:-0.152px;">Bookmarks</div>
<div class="t" style="left:283.4px;top:856.54px;font-size:12px;line-height:12px;color:#000;letter-spacing:-0.153px;">Before text</div>
<div class="t" style="left:283.4px;top:876.44px;font-size:12px;line-height:12px;color:#000;letter-spacing:0.076px;">After text</div>
<div class="a" style="left:1231px;top:807px;width:3px;height:3px;background:#ababab"></div>
<div class="a" style="left:1231px;top:812px;width:3px;height:3px;background:#ababab"></div>
<div class="a" style="left:1231px;top:817px;width:3px;height:3px;background:#ababab"></div>
<div class="t" style="left:1241.0px;top:646.84px;font-size:12px;line-height:12px;color:#000;letter-spacing:0.328px;">Input</div>
<div class="a" style="left:1274px;top:645px;width:1px;height:14px;background:#cfcfcf"></div>
<div class="t" style="left:1281.3px;top:646.84px;font-size:12px;line-height:12px;color:#000;letter-spacing:0.295px;">Output</div>
<div class="a" style="left:1235px;top:661px;width:40px;height:3px;background:#3b7ec9"></div>
<div class="a" style="left:1235px;top:664px;width:439px;height:320px;background:#fff"></div>
<svg style="left:1239px;top:667.6px" width="16" height="12" viewBox="0 0 16 12" ><path d="M0.5 1.5H5.5L7 3H13V5H3.5L0.5 10.5Z" fill="#a8a8a8"/><path d="M3.5 5.5H15.5L12.5 11H0.8Z" fill="#a8a8a8"/></svg>
<div class="t" style="left:1258.7px;top:669.44px;font-size:12px;line-height:12px;color:#000;letter-spacing:-0.499px;">Message</div>
<svg style="left:1239px;top:690.0px" width="10" height="7" viewBox="0 0 10 7" ><path d="M0.6 0.6L4.4 5.2L8.2 0.6" fill="none" stroke="#b0b0b0" stroke-width="1.5"/></svg>
<div class="a" style="left:1248px;top:691.6px;width:6px;height:1px;background:#dcdcdc"></div>
<svg style="left:1257px;top:685.6px" width="16" height="12" viewBox="0 0 16 12" ><path d="M0.5 1.5H5.5L7 3H13V5H3.5L0.5 10.5Z" fill="#a8a8a8"/><path d="M3.5 5.5H15.5L12.5 11H0.8Z" fill="#a8a8a8"/></svg>
<div class="t" style="left:1276.8px;top:687.44px;font-size:12px;line-height:12px;color:#000;letter-spacing:0.078px;">Content</div>
<svg style="left:1277px;top:702.6px" width="11" height="15" viewBox="0 0 11 15" ><path d="M4.2 0.5H10.5V14.5H0.5V4.2Z" fill="#a8a8a8"/><path d="M0.5 2.6L2.6 0.5V2.6Z" fill="#a8a8a8"/><path d="M0.2 3.6L3.6 0.2" stroke="#fff" stroke-width="0.8"/></svg>
<div class="t" style="left:1294.8px;top:705.44px;font-size:12px;line-height:12px;color:#000;letter-spacing:-0.365px;">Type (Expected): PDF</div>
<svg style="left:1275px;top:722.6px" width="15" height="12" viewBox="0 0 15 12" ><path d="M1 6L5 10L13.5 1" fill="none" stroke="#5e9c86" stroke-width="2.6"/></svg>
<div class="t" style="left:1294.8px;top:723.44px;font-size:12px;line-height:12px;color:#000;letter-spacing:-0.143px;">Type (Actual): Binary data</div>
<svg style="left:1239px;top:744.0px" width="10" height="7" viewBox="0 0 10 7" ><path d="M0.6 0.6L4.4 5.2L8.2 0.6" fill="none" stroke="#b0b0b0" stroke-width="1.5"/></svg>
<div class="a" style="left:1248px;top:745.6px;width:6px;height:1px;background:#dcdcdc"></div>
<svg style="left:1257px;top:739.6px" width="16" height="12" viewBox="0 0 16 12" ><path d="M0.5 1.5H5.5L7 3H13V5H3.5L0.5 10.5Z" fill="#a8a8a8"/><path d="M3.5 5.5H15.5L12.5 11H0.8Z" fill="#a8a8a8"/></svg>
<div class="t" style="left:1276.8px;top:741.44px;font-size:12px;line-height:12px;color:#000;letter-spacing:-0.330px;">Variables</div>
<svg style="left:1257px;top:762.0px" width="10" height="7" viewBox="0 0 10 7" ><path d="M0.6 0.6L4.4 5.2L8.2 0.6" fill="none" stroke="#b0b0b0" stroke-width="1.5"/></svg>
<div class="a" style="left:1266px;top:763.6px;width:6px;height:1px;background:#dcdcdc"></div>
<svg style="left:1275px;top:757.6px" width="16" height="12" viewBox="0 0 16 12" ><path d="M0.5 1.5H5.5L7 3H13V5H3.5L0.5 10.5Z" fill="#a8a8a8"/><path d="M3.5 5.5H15.5L12.5 11H0.8Z" fill="#a8a8a8"/></svg>
<div class="t" style="left:1294.8px;top:759.44px;font-size:12px;line-height:12px;color:#000;letter-spacing:-0.482px;">Message</div>
<svg style="left:1295px;top:774.6px" width="11" height="15" viewBox="0 0 11 15" ><path d="M4.2 0.5H10.5V14.5H0.5V4.2Z" fill="#a8a8a8"/><path d="M0.5 2.6L2.6 0.5V2.6Z" fill="#a8a8a8"/><path d="M0.2 3.6L3.6 0.2" stroke="#fff" stroke-width="0.8"/></svg>
<div class="t" style="left:1312.8px;top:777.44px;font-size:12px;line-height:12px;color:#000;letter-spacing:-0.025px;">$[msg.mimeType] (String)</div>
<svg style="left:1295px;top:792.6px" width="11" height="15" viewBox="0 0 11 15" ><path d="M4.2 0.5H10.5V14.5H0.5V4.2Z" fill="#a8a8a8"/><path d="M0.5 2.6L2.6 0.5V2.6Z" fill="#a8a8a8"/><path d="M0.2 3.6L3.6 0.2" stroke="#fff" stroke-width="0.8"/></svg>
<div class="t" style="left:1312.8px;top:795.44px;font-size:12px;line-height:12px;color:#000;letter-spacing:0.103px;">$[msg.number] (Number)</div>
<svg style="left:1295px;top:810.6px" width="11" height="15" viewBox="0 0 11 15" ><path d="M4.2 0.5H10.5V14.5H0.5V4.2Z" fill="#a8a8a8"/><path d="M0.5 2.6L2.6 0.5V2.6Z" fill="#a8a8a8"/><path d="M0.2 3.6L3.6 0.2" stroke="#fff" stroke-width="0.8"/></svg>
<div class="t" style="left:1312.8px;top:813.44px;font-size:12px;line-height:12px;color:#000;letter-spacing:-0.096px;">$[msg.payloadExt] (String)</div>
<svg style="left:1295px;top:828.6px" width="11" height="15" viewBox="0 0 11 15" ><path d="M4.2 0.5H10.5V14.5H0.5V4.2Z" fill="#a8a8a8"/><path d="M0.5 2.6L2.6 0.5V2.6Z" fill="#a8a8a8"/><path d="M0.2 3.6L3.6 0.2" stroke="#fff" stroke-width="0.8"/></svg>
<div class="t" style="left:1312.8px;top:831.44px;font-size:12px;line-height:12px;color:#000;letter-spacing:-0.041px;">$[msg.payloadName] (String)</div>
<svg style="left:1295px;top:846.6px" width="11" height="15" viewBox="0 0 11 15" ><path d="M4.2 0.5H10.5V14.5H0.5V4.2Z" fill="#a8a8a8"/><path d="M0.5 2.6L2.6 0.5V2.6Z" fill="#a8a8a8"/><path d="M0.2 3.6L3.6 0.2" stroke="#fff" stroke-width="0.8"/></svg>
<div class="t" style="left:1312.8px;top:849.44px;font-size:12px;line-height:12px;color:#000;letter-spacing:-0.113px;">$[msg.payloadSize] (Number)</div>
<svg style="left:1257px;top:870.0px" width="10" height="7" viewBox="0 0 10 7" ><path d="M0.6 0.6L4.4 5.2L8.2 0.6" fill="none" stroke="#b0b0b0" stroke-width="1.5"/></svg>
<div class="a" style="left:1266px;top:871.6px;width:6px;height:1px;background:#dcdcdc"></div>
<svg style="left:1275px;top:865.6px" width="16" height="12" viewBox="0 0 16 12" ><path d="M0.5 1.5H5.5L7 3H13V5H3.5L0.5 10.5Z" fill="#a8a8a8"/><path d="M3.5 5.5H15.5L12.5 11H0.8Z" fill="#a8a8a8"/></svg>
<div class="t" style="left:1294.8px;top:867.44px;font-size:12px;line-height:12px;color:#000;letter-spacing:-0.404px;">Source</div>
<svg style="left:1295px;top:882.6px" width="11" height="15" viewBox="0 0 11 15" ><path d="M4.2 0.5H10.5V14.5H0.5V4.2Z" fill="#a8a8a8"/><path d="M0.5 2.6L2.6 0.5V2.6Z" fill="#a8a8a8"/><path d="M0.2 3.6L3.6 0.2" stroke="#fff" stroke-width="0.8"/></svg>
<div class="t" style="left:1312.8px;top:885.44px;font-size:12px;line-height:12px;color:#000;letter-spacing:-0.182px;">$[src.dateTime] (Date)</div>
<svg style="left:1295px;top:900.6px" width="11" height="15" viewBox="0 0 11 15" ><path d="M4.2 0.5H10.5V14.5H0.5V4.2Z" fill="#a8a8a8"/><path d="M0.5 2.6L2.6 0.5V2.6Z" fill="#a8a8a8"/><path d="M0.2 3.6L3.6 0.2" stroke="#fff" stroke-width="0.8"/></svg>
<div class="t" style="left:1312.8px;top:903.44px;font-size:12px;line-height:12px;color:#000;letter-spacing:-0.121px;">$[src.fileExtension] (String)</div>
<svg style="left:1295px;top:918.6px" width="11" height="15" viewBox="0 0 11 15" ><path d="M4.2 0.5H10.5V14.5H0.5V4.2Z" fill="#a8a8a8"/><path d="M0.5 2.6L2.6 0.5V2.6Z" fill="#a8a8a8"/><path d="M0.2 3.6L3.6 0.2" stroke="#fff" stroke-width="0.8"/></svg>
<div class="t" style="left:1312.8px;top:921.44px;font-size:12px;line-height:12px;color:#000;letter-spacing:-0.069px;">$[src.fileName] (String)</div>
<svg style="left:1295px;top:936.6px" width="11" height="15" viewBox="0 0 11 15" ><path d="M4.2 0.5H10.5V14.5H0.5V4.2Z" fill="#a8a8a8"/><path d="M0.5 2.6L2.6 0.5V2.6Z" fill="#a8a8a8"/><path d="M0.2 3.6L3.6 0.2" stroke="#fff" stroke-width="0.8"/></svg>
<div class="t" style="left:1312.8px;top:939.44px;font-size:12px;line-height:12px;color:#000;letter-spacing:-0.107px;">$[src.filePath] (String)</div>
<svg style="left:1295px;top:954.6px" width="11" height="15" viewBox="0 0 11 15" ><path d="M4.2 0.5H10.5V14.5H0.5V4.2Z" fill="#a8a8a8"/><path d="M0.5 2.6L2.6 0.5V2.6Z" fill="#a8a8a8"/><path d="M0.2 3.6L3.6 0.2" stroke="#fff" stroke-width="0.8"/></svg>
<div class="t" style="left:1312.8px;top:957.44px;font-size:12px;line-height:12px;color:#000;letter-spacing:-0.065px;">$[src.mimeType] (String)</div>
<div class="a" style="left:1243px;top:683px;width:1px;height:63px;background:#dcdcdc"></div>
<div class="a" style="left:1261px;top:701px;width:1px;height:28px;background:#dcdcdc"></div>
<div class="a" style="left:1261px;top:710px;width:11px;height:1px;background:#dcdcdc"></div>
<div class="a" style="left:1261px;top:728px;width:11px;height:1px;background:#dcdcdc"></div>
<div class="a" style="left:1261px;top:755px;width:1px;height:118px;background:#dcdcdc"></div>
<div class="a" style="left:1279px;top:773px;width:1px;height:82px;background:#dcdcdc"></div>
<div class="a" style="left:1279px;top:782px;width:11px;height:1px;background:#dcdcdc"></div>
<div class="a" style="left:1279px;top:800px;width:11px;height:1px;background:#dcdcdc"></div>
<div class="a" style="left:1279px;top:818px;width:11px;height:1px;background:#dcdcdc"></div>
<div class="a" style="left:1279px;top:836px;width:11px;height:1px;background:#dcdcdc"></div>
<div class="a" style="left:1279px;top:854px;width:11px;height:1px;background:#dcdcdc"></div>
<div class="a" style="left:1279px;top:881px;width:1px;height:82px;background:#dcdcdc"></div>
<div class="a" style="left:1279px;top:890px;width:11px;height:1px;background:#dcdcdc"></div>
<div class="a" style="left:1279px;top:908px;width:11px;height:1px;background:#dcdcdc"></div>
<div class="a" style="left:1279px;top:926px;width:11px;height:1px;background:#dcdcdc"></div>
<div class="a" style="left:1279px;top:944px;width:11px;height:1px;background:#dcdcdc"></div>
<div class="a" style="left:1279px;top:962px;width:11px;height:1px;background:#dcdcdc"></div>
</body></html>
